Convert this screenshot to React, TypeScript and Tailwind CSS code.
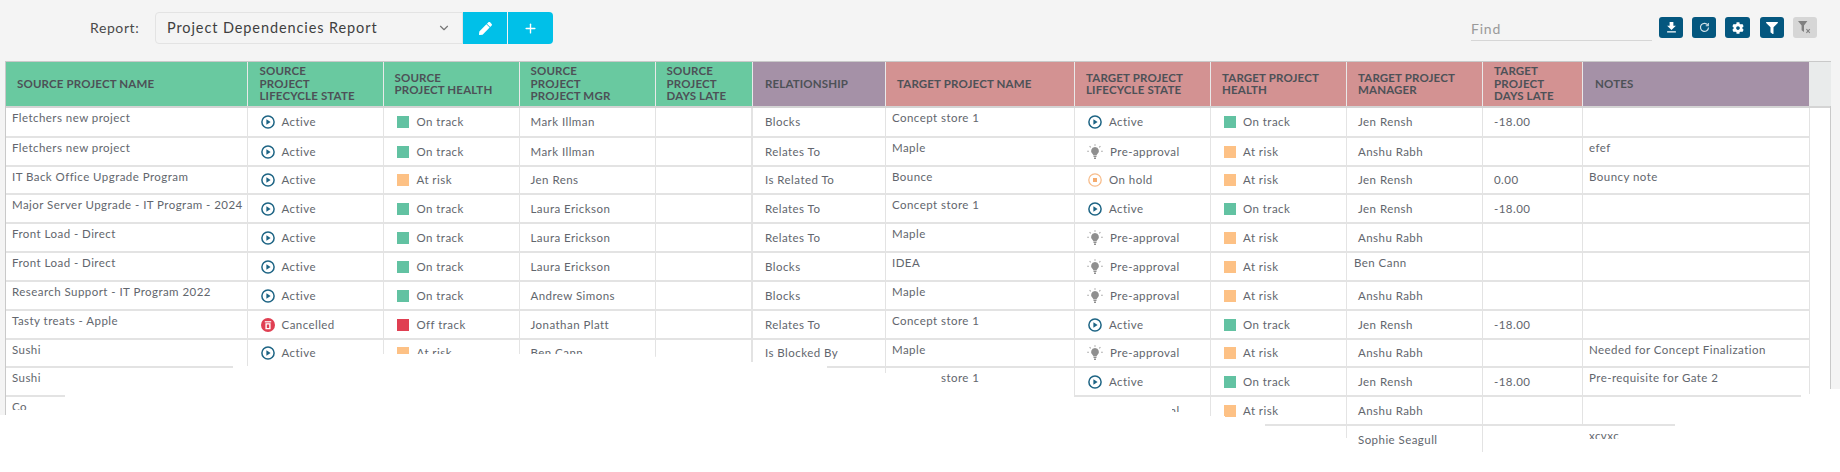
import { ChevronDown, Plus } from "lucide-react";
import { FaCog, FaFilter, FaPen } from "react-icons/fa";
import { MdFileDownload } from "react-icons/md";

type State = "Active" | "Pre-approval" | "On hold" | "Cancelled";
type Health = "On track" | "At risk" | "Off track";

interface Row {
  height: string;
  name: string;
  state: State;
  health: Health;
  mgr: string;
  rel: string;
  target: string;
  targetState: State;
  targetHealth: Health;
  targetMgr: string;
  late: string;
  notes: string;
  topMgr?: boolean;
}

const rows: Row[] = [
  { height: "h-[30px]", name: "Fletchers new project", state: "Active", health: "On track", mgr: "Mark Illman", rel: "Blocks", target: "Concept store 1", targetState: "Active", targetHealth: "On track", targetMgr: "Jen Rensh", late: "-18.00", notes: "" },
  { height: "h-[29px]", name: "Fletchers new project", state: "Active", health: "On track", mgr: "Mark Illman", rel: "Relates To", target: "Maple", targetState: "Pre-approval", targetHealth: "At risk", targetMgr: "Anshu Rabh", late: "", notes: "efef" },
  { height: "h-[28px]", name: "IT Back Office Upgrade Program", state: "Active", health: "At risk", mgr: "Jen Rens", rel: "Is Related To", target: "Bounce", targetState: "On hold", targetHealth: "At risk", targetMgr: "Jen Rensh", late: "0.00", notes: "Bouncy note" },
  { height: "h-[29px]", name: "Major Server Upgrade - IT Program - 2024", state: "Active", health: "On track", mgr: "Laura Erickson", rel: "Relates To", target: "Concept store 1", targetState: "Active", targetHealth: "On track", targetMgr: "Jen Rensh", late: "-18.00", notes: "" },
  { height: "h-[29px]", name: "Front Load - Direct", state: "Active", health: "On track", mgr: "Laura Erickson", rel: "Relates To", target: "Maple", targetState: "Pre-approval", targetHealth: "At risk", targetMgr: "Anshu Rabh", late: "", notes: "" },
  { height: "h-[29px]", name: "Front Load - Direct", state: "Active", health: "On track", mgr: "Laura Erickson", rel: "Blocks", target: "IDEA", targetState: "Pre-approval", targetHealth: "At risk", targetMgr: "Ben Cann", late: "", notes: "", topMgr: true },
  { height: "h-[29px]", name: "Research Support - IT Program 2022", state: "Active", health: "On track", mgr: "Andrew Simons", rel: "Blocks", target: "Maple", targetState: "Pre-approval", targetHealth: "At risk", targetMgr: "Anshu Rabh", late: "", notes: "" },
  { height: "h-[29px]", name: "Tasty treats - Apple", state: "Cancelled", health: "Off track", mgr: "Jonathan Platt", rel: "Relates To", target: "Concept store 1", targetState: "Active", targetHealth: "On track", targetMgr: "Jen Rensh", late: "-18.00", notes: "" },
  { height: "h-[28px]", name: "Sushi", state: "Active", health: "At risk", mgr: "Ben Cann", rel: "Is Blocked By", target: "Maple", targetState: "Pre-approval", targetHealth: "At risk", targetMgr: "Anshu Rabh", late: "", notes: "Needed for Concept Finalization" },
  { height: "h-[29px]", name: "Sushi", state: "Active", health: "On track", mgr: "Ben Cann", rel: "Relates To", target: "Concept store 1", targetState: "Active", targetHealth: "On track", targetMgr: "Jen Rensh", late: "-18.00", notes: "Pre-requisite for Gate 2" },
  { height: "h-[29px]", name: "Concept store 1", state: "Active", health: "At risk", mgr: "Ben Cann", rel: "Blocks", target: "Maple", targetState: "Pre-approval", targetHealth: "At risk", targetMgr: "Anshu Rabh", late: "", notes: "" },
  { height: "h-[29px]", name: "", state: "Active", health: "At risk", mgr: "", rel: "", target: "", targetState: "Active", targetHealth: "At risk", targetMgr: "Sophie Seagull", late: "", notes: "xcvxc" },
];

const colTemplate =
  "grid grid-cols-[241.5px_136px_136px_136px_97.5px_133px_189px_136px_136px_136px_100px_226.5px_21px]";

const healthColor: Record<Health, string> = {
  "On track": "bg-[#62c2a2]",
  "At risk": "bg-[#fdc185]",
  "Off track": "bg-[#e03f52]",
};

function StateIcon({ state }: { state: State }) {
  if (state === "Active") {
    return (
      <svg width="14" height="14" viewBox="0 0 14 14" className="shrink-0">
        <circle cx="7" cy="7" r="6.1" fill="none" stroke="#1d6484" strokeWidth="1.5" />
        <path d="M5.4 4.2 9.6 7l-4.2 2.8z" fill="#1d6484" />
      </svg>
    );
  }
  if (state === "On hold") {
    return (
      <svg width="14" height="14" viewBox="0 0 14 14" className="shrink-0">
        <circle cx="7" cy="7" r="6.2" fill="none" stroke="#f7bd8c" strokeWidth="1.3" />
        <rect x="5" y="5" width="4" height="4" fill="#f5ab6e" />
      </svg>
    );
  }
  if (state === "Cancelled") {
    return (
      <svg width="14" height="14" viewBox="0 0 14 14" className="shrink-0">
        <circle cx="7" cy="7" r="7" fill="#e03f52" />
        <path d="M3.8 3.2h6.4v1.2H3.8z" fill="#fff" />
        <path d="M4.4 5.2h5.2v6H4.4zM5.8 6.4v3.6h2.4V6.4z" fill="#fff" fillRule="evenodd" />
      </svg>
    );
  }
  return (
    <svg width="16" height="16" viewBox="0 0 16 16" className="-ml-[1px] shrink-0">
      <path d="M8 3a3.9 3.9 0 0 0-2.4 7c.6.5.7 1 .8 1.5h3.2c.1-.5.2-1 .8-1.5A3.9 3.9 0 0 0 8 3z" fill="#8f8f8f" />
      <path d="M6.5 12h3v1.1h-3zM7 13.5h2v1.4H7z" fill="#8f8f8f" />
      <path d="M8 .2v1.6M2.6 2.2l1.1 1.1M13.4 2.2l-1.1 1.1M.2 7.2h1.7M14.1 7.2h1.7" stroke="#a8a8a8" strokeWidth="1.1" />
    </svg>
  );
}

function StateCell({ state, gap }: { state: State; gap: string }) {
  return (
    <div className={`flex items-center border-r border-[#e4e4e4] ${gap}`}>
      <StateIcon state={state} />
      <span>{state}</span>
    </div>
  );
}

function HealthCell({ health, pad }: { health: Health; pad: string }) {
  return (
    <div className={`flex items-center border-r border-[#e4e4e4] ${pad}`}>
      <span className={`h-[12px] w-[12px] shrink-0 ${healthColor[health]}`} />
      <span>{health}</span>
    </div>
  );
}

function HeadCell({ lines, color, pad }: { lines: string[]; color: string; pad: string }) {
  return (
    <div className={`flex flex-col justify-center border-r border-[#e9e9e9] ${color} ${pad}`}>
      {lines.map((line) => (
        <span key={line + lines.length} className="whitespace-nowrap">
          {line}
        </span>
      ))}
    </div>
  );
}

const green = "bg-[#69c9a0]";
const red = "bg-[#d39292]";
const purple = "bg-[#a591a7]";

export default function App() {
  return (
    <div className="relative h-[472px] w-[1840px] overflow-hidden bg-[#f4f4f4] font-['Lato',sans-serif] text-[#62666d]">
      {/* Toolbar */}
      <div className="flex h-[61px] items-start">
        <span className="mt-[19px] ml-[90px] w-[65px] text-[14px] leading-[18px] tracking-[0.6px] text-[#4a4a4a]">
          Report:
        </span>
        <div className="mt-[12px] flex h-[32px] w-[308px] items-center justify-between rounded-l-[4px] border border-[#e3e3e3] pr-[11px] pl-[11px] text-[14.5px] tracking-[0.9px] text-[#3f3f3f]">
          <span>Project Dependencies Report</span>
          <ChevronDown size={14} className="text-[#777]" />
        </div>
        <button className="mt-[12px] flex h-[32px] w-[44px] items-center justify-center bg-[#00c0e8] text-white">
          <FaPen size={13} />
        </button>
        <button className="mt-[12px] ml-[1px] flex h-[32px] w-[45px] items-center justify-center rounded-r-[4px] bg-[#00c0e8] text-white">
          <Plus size={15} strokeWidth={2.2} />
        </button>
        <div className="mt-[19px] ml-[918px] h-[22px] w-[181px] border-b border-[#d6d6d6] text-[14px] leading-[20px] tracking-[0.8px] text-[#9a9a9a]">
          Find
        </div>
        <div className="mt-[17px] ml-[7px] flex">
          <button className="flex h-[21px] w-[24px] items-center justify-center rounded-[3px] bg-[#04577f] text-white">
            <MdFileDownload size={15} />
          </button>
          <button className="ml-[9px] flex h-[21px] w-[24px] items-center justify-center rounded-[3px] bg-[#04577f] text-white">
            <svg width="11" height="11" viewBox="0 0 12 12" fill="none" stroke="#cfe0e8" strokeWidth="1.3">
              <path d="M9.8 3.6A4.4 4.4 0 1 0 10.4 6" />
              <path d="M10.2 1.2v2.9H7.4" strokeWidth="1.1" />
            </svg>
          </button>
          <button className="ml-[9px] flex h-[21px] w-[25px] items-center justify-center rounded-[3px] bg-[#04577f] text-white">
            <FaCog size={12} />
          </button>
          <button className="ml-[10px] flex h-[21px] w-[24px] items-center justify-center rounded-[3px] bg-[#04577f] text-white">
            <FaFilter size={12} />
          </button>
          <button className="ml-[9px] flex h-[21px] w-[24px] items-center justify-center rounded-[3px] bg-[#d6d6d6]">
            <svg width="14" height="13" viewBox="0 0 14 13">
              <path d="M0 0h9.4L6 4.6V11L3.6 9.2V4.6z" fill="#808080" />
              <path d="M8.4 8.2l3.4 3.6M11.8 8.2l-3.4 3.6" stroke="#808080" strokeWidth="1.1" />
            </svg>
          </button>
        </div>
      </div>

      {/* Report table */}
      <div className="ml-[5px] w-[1826px] border-x border-t border-[#c9c9c9] bg-white">
        <div className={`${colTemplate} h-[46px] border-b-2 border-[#d4d4d4] text-[11.5px] leading-[12.5px] font-bold tracking-[0.15px] text-[#4d5157] uppercase`}>
          <HeadCell lines={["Source Project Name"]} color={green} pad="pl-[11px]" />
          <HeadCell lines={["Source", "Project", "Lifecycle State"]} color={green} pad="pl-[12px]" />
          <HeadCell lines={["Source", "Project Health"]} color={green} pad="pl-[11px]" />
          <HeadCell lines={["Source", "Project", "Project Mgr"]} color={green} pad="pl-[11px]" />
          <HeadCell lines={["Source", "Project", "Days Late"]} color={green} pad="pl-[11px]" />
          <HeadCell lines={["Relationship"]} color={purple} pad="pl-[12px]" />
          <HeadCell lines={["Target Project Name"]} color={red} pad="pl-[11px]" />
          <HeadCell lines={["Target Project", "Lifecycle State"]} color={red} pad="pl-[11px]" />
          <HeadCell lines={["Target Project", "Health"]} color={red} pad="pl-[11px]" />
          <HeadCell lines={["Target Project", "Manager"]} color={red} pad="pl-[11px]" />
          <HeadCell lines={["Target", "Project", "Days Late"]} color={red} pad="pl-[11px]" />
          <HeadCell lines={["Notes"]} color={purple} pad="pl-[12px]" />
          <div className="bg-[#e9ebeb]" />
        </div>

        {rows.map((row, i) => (
          <div key={i} className={`${colTemplate} ${row.height} text-[11.5px] leading-[14px] tracking-[0.45px]`}>
            <div className="border-r border-b-2 border-[#e3e3e3] pt-[3px] pl-[6px] whitespace-nowrap">{row.name}</div>
            <div className="grid border-b-2 border-[#e3e3e3]">
              <StateCell state={row.state} gap="gap-[7px] pl-[13px]" />
            </div>
            <div className="grid border-b-2 border-[#e3e3e3]">
              <HealthCell health={row.health} pad="gap-[8px] pl-[13px]" />
            </div>
            <div className="flex items-center border-r border-b-2 border-[#e3e3e3] pl-[11px] whitespace-nowrap">{row.mgr}</div>
            <div className="border-r-2 border-b-2 border-[#e3e3e3]" />
            <div className="flex items-center border-r border-b-2 border-[#e3e3e3] pl-[12px] whitespace-nowrap">{row.rel}</div>
            <div className="border-r border-b-2 border-[#e3e3e3] pt-[3px] pl-[6px] whitespace-nowrap">{row.target}</div>
            <div className="grid border-b-2 border-[#e3e3e3]">
              <StateCell state={row.targetState} gap="gap-[7px] pl-[13px]" />
            </div>
            <div className="grid border-b-2 border-[#e3e3e3]">
              <HealthCell health={row.targetHealth} pad="gap-[7px] pl-[13px]" />
            </div>
            {row.topMgr ? (
              <div className="border-r border-b-2 border-[#e3e3e3] pt-[3px] pl-[7px] whitespace-nowrap">{row.targetMgr}</div>
            ) : (
              <div className="flex items-center border-r border-b-2 border-[#e3e3e3] pl-[11px] whitespace-nowrap">{row.targetMgr}</div>
            )}
            <div className="flex items-center border-r border-b-2 border-[#e3e3e3] pl-[11px]">{row.late}</div>
            <div className="border-r border-b-2 border-[#e3e3e3] pt-[3px] pl-[6px] whitespace-nowrap">{row.notes}</div>
            <div />
          </div>
        ))}
      </div>

      {/* White wash over the bottom of the capture */}
      <div className="absolute inset-0 bg-white [clip-path:polygon(0px_472px,0px_415px,6px_415px,6px_410px,27px_410px,27px_397px,65px_397px,65px_368px,233px_368px,233px_366px,383px_366px,383px_354px,650px_354px,656px_357px,745px_357px,745px_362px,827px_362px,827px_368px,885px_368px,885px_373px,888px_373px,888px_368px,938px_368px,938px_382px,1074px_382px,1074px_397px,1172px_397px,1172px_412px,1210px_412px,1210px_416px,1225px_416px,1225px_418px,1265px_418px,1265px_426px,1346px_426px,1346px_438px,1347px_438px,1347px_426px,1358px_426px,1358px_446px,1445px_446px,1445px_426px,1482px_426px,1482px_452px,1483px_452px,1483px_426px,1589px_426px,1589px_439px,1620px_439px,1620px_426px,1675px_426px,1675px_397px,1801px_397px,1801px_394px,1830px_394px,1830px_389px,1840px_389px,1840px_472px)]" />
    </div>
  );
}
